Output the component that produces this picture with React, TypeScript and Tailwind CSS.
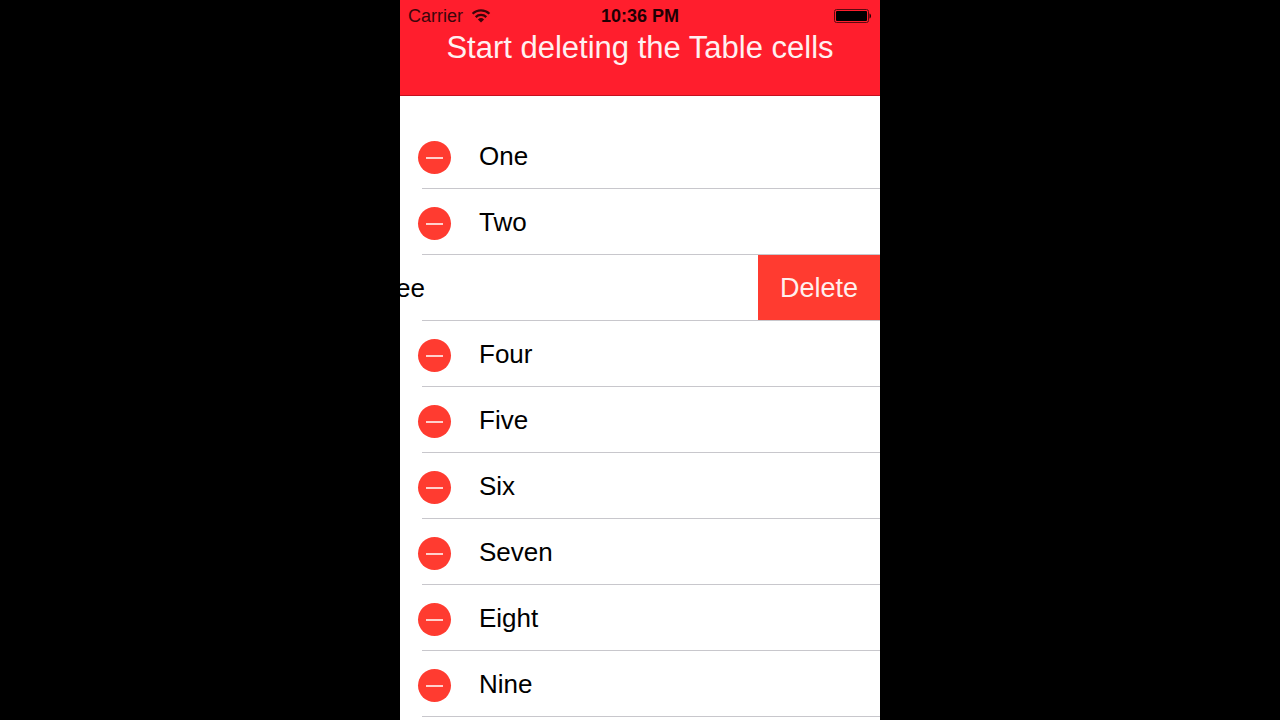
import { useState } from "react";

const initialRows = ["One", "Two", "Three", "Four", "Five", "Six", "Seven", "Eight", "Nine"];

function WifiIcon() {
	return (
		<svg width="20" height="14" viewBox="0 0 20 14" fill="none" stroke="currentColor" strokeWidth="2.3" aria-hidden="true">
			<path d="M1.6 4.8a12 12 0 0 1 16.8 0" />
			<path d="M4.7 8.1a7.6 7.6 0 0 1 10.6 0" />
			<path d="M10 13.4 6.9 10.4a4.6 4.6 0 0 1 6.2 0Z" fill="currentColor" stroke="none" />
		</svg>
	);
}

function BatteryIcon() {
	return (
		<svg width="38" height="16" viewBox="0 0 38 16" aria-hidden="true">
			<rect x="0.5" y="1.5" width="34" height="13" rx="2" fill="none" stroke="#5a0a10" />
			<rect x="2" y="3" width="31" height="10" rx="1" fill="#000" />
			<path d="M35.5 5.5c2 .5 2 4.5 0 5Z" fill="#1a0002" />
		</svg>
	);
}

function StatusBar() {
	return (
		<div className="grid h-8 grid-cols-3 items-center pl-2 pr-2 text-lg text-[#3c050a]">
			<div className="flex items-center gap-2">
				<span>Carrier</span>
				<WifiIcon />
			</div>
			<span className="text-center font-bold text-[#1f0003]">10:36 PM</span>
			<div className="flex justify-end">
				<BatteryIcon />
			</div>
		</div>
	);
}

type RowProps = {
	label: string;
	open: boolean;
	onToggle: () => void;
	onDelete: () => void;
};

function Row({ label, open, onToggle, onDelete }: RowProps) {
	return (
		<li>
			{/* the cell slides left by the width of the delete button */}
			<div className="flex h-[65px] justify-end overflow-hidden">
				<div className="flex w-full shrink-0 items-center gap-7 pl-[18px]">
					<button
						type="button"
						aria-label={`Remove ${label}`}
						onClick={onToggle}
						className="mt-1 flex size-[33px] items-center justify-center rounded-full bg-[#ff3b30]"
					>
						<span className="h-0.5 w-[17px] bg-[#ffd0cc]" />
					</button>
					<span className="text-[26px] leading-8 text-black">{label}</span>
				</div>
				{open && (
					<button
						type="button"
						onClick={onDelete}
						className="w-[122px] shrink-0 bg-[#ff3b30] text-[27px] leading-8 text-[#fff0ee]"
					>
						Delete
					</button>
				)}
			</div>
			<div className="ml-[22px] h-px bg-[#c8c7cc]" />
		</li>
	);
}

export default function App() {
	const [rows, setRows] = useState(initialRows);
	const [openRow, setOpenRow] = useState<string | null>("Three");

	return (
		<div className="flex min-h-screen justify-center bg-black font-['Liberation_Sans',Arial,sans-serif]">
			<main className="w-full max-w-[480px] overflow-hidden bg-white">
				<header className="border-b border-[#c4101f] bg-[#ff1e2d] pb-[31px]">
					<StatusBar />
					<h1 className="text-center text-[31px] leading-8 text-[#fff0f1]">Start deleting the Table cells</h1>
				</header>
				<ul className="pt-[27px]">
					{rows.map((label) => (
						<Row
							key={label}
							label={label}
							open={openRow === label}
							onToggle={() => setOpenRow(openRow === label ? null : label)}
							onDelete={() => setRows(rows.filter((row) => row !== label))}
						/>
					))}
				</ul>
			</main>
		</div>
	);
}
